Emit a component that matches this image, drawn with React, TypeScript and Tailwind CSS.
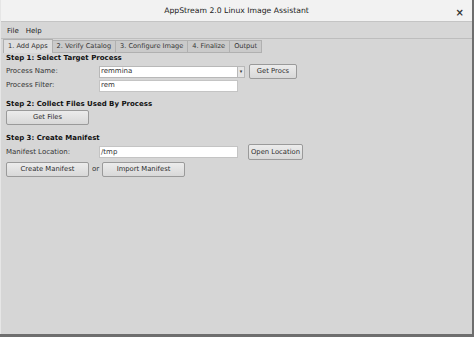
export default function App() {
  const font = { fontFamily: '"DejaVu Sans", sans-serif' };
  const btn =
    "flex items-center justify-center whitespace-nowrap h-[15px] border border-[#9a9a9a] rounded-[2px] bg-gradient-to-b from-[#ececec] to-[#d8d8d8] text-[6.8px] text-[#2e2e2e]";

  return (
    <div style={font} className="w-[474px] h-[337px] bg-[#6e6e6e] overflow-hidden">
      <div className="w-[472px] h-[334px] flex flex-col bg-[#d6d6d6] border-l border-[#e6e6e6]">
        {/* Title bar */}
        <div className="h-[22px] shrink-0 relative flex items-center justify-center bg-[#f2f2f2] border-b border-[#c4c4c4]">
          <span className="text-[7.7px] text-[#222] pt-[1px]">AppStream 2.0 Linux Image Assistant</span>
          <span className="absolute right-[8px] top-[5px] text-[10px] font-bold text-[#333]">×</span>
        </div>

        {/* Menu bar */}
        <div className="h-[17px] shrink-0 flex items-center gap-[7px] px-[6px] pt-[2px] text-[7px] text-[#222] border-b border-[#bdbdbd]">
          <span>File</span>
          <span>Help</span>
        </div>

        {/* Tabs */}
        <div className="h-[14px] shrink-0 flex items-end pl-[2px] text-[6.6px] text-[#333]">
          <div className="h-[14px] px-[4px] flex items-center bg-[#dedede] border border-b-0 border-[#b0b0b0]">1. Add Apps</div>
          <div className="h-[13px] px-[4px] flex items-center bg-[#cacaca] border border-l-0 border-[#b0b0b0]">2. Verify Catalog</div>
          <div className="h-[13px] px-[4px] flex items-center bg-[#cacaca] border border-l-0 border-[#b0b0b0]">3. Configure Image</div>
          <div className="h-[13px] px-[4px] flex items-center bg-[#cacaca] border border-l-0 border-[#b0b0b0]">4. Finalize</div>
          <div className="h-[13px] px-[4px] flex items-center bg-[#cacaca] border border-l-0 border-[#b0b0b0]">Output</div>
        </div>

        {/* Content */}
        <div className="flex flex-col px-[5px] text-[7px] text-[#333]">
          <div className="h-[10px] flex items-center font-bold text-[#111]">Step 1: Select Target Process</div>

          <div className="mt-[1px] h-[15px] flex items-center">
            <span className="w-[93px]">Process Name:</span>
            <div className="w-[146px] h-[12px] flex items-center bg-white border border-[#b8b8b8]">
              <span className="flex-1 pl-[1px]">remmina</span>
              <span className="w-[7px] h-[10px] flex items-center justify-center bg-[#e4e4e4] border-l border-[#b8b8b8] text-[5px]">▾</span>
            </div>
            <div className={btn + " ml-[4px] w-[48px]"}>Get Procs</div>
          </div>

          <div className="h-[13px] flex items-center">
            <span className="w-[93px]">Process Filter:</span>
            <div className="w-[139px] h-[12px] flex items-center pl-[1px] bg-white border border-[#c4c4c4]">rem</div>
          </div>

          <div className="mt-[7px] h-[11px] flex items-center font-bold text-[#111]">Step 2: Collect Files Used By Process</div>
          <div className={btn + " w-[83px]"}>Get Files</div>

          <div className="mt-[8px] h-[11px] flex items-center font-bold text-[#111]">Step 3: Create Manifest</div>
          <div className="h-[16px] flex items-center">
            <span className="w-[93px]">Manifest Location:</span>
            <div className="w-[139px] h-[12px] flex items-center pl-[1px] bg-white border border-[#c4c4c4]">/tmp</div>
            <div className={btn + " ml-[10px] w-[55px] h-[16px]"}>Open Location</div>
          </div>
          <div className="mt-[2px] h-[15px] flex items-center">
            <div className={btn + " w-[83px]"}>Create Manifest</div>
            <span className="w-[13px] text-center">or</span>
            <div className={btn + " w-[83px]"}>Import Manifest</div>
          </div>
        </div>
      </div>
    </div>
  );
}
